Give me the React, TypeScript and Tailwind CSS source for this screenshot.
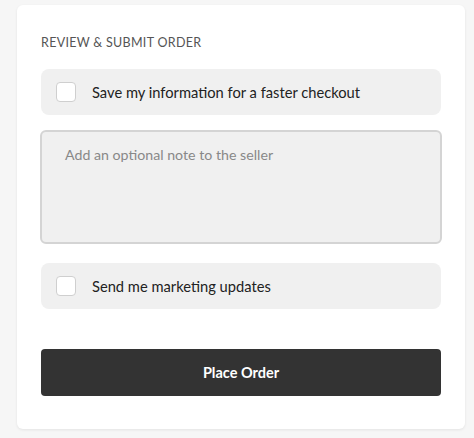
import React, { useState } from 'react';

const font = { fontFamily: 'Lato, "Liberation Sans", sans-serif' };

const CheckRow: React.FC<{ label: string }> = ({ label }) => {
  const [checked, setChecked] = useState(false);
  return (
    <label className="flex h-[46px] cursor-pointer items-center gap-4 rounded-lg bg-[#f0f0f0] px-[15px]">
      <span
        onClick={() => setChecked(!checked)}
        className={`h-5 w-5 shrink-0 rounded-[4px] border border-[#cfcfcf] ${checked ? 'bg-[#333]' : 'bg-white'}`}
      />
      <span className="text-[14.7px] text-[#222]">{label}</span>
    </label>
  );
};

export default function App() {
  return (
    <div className="min-h-[438px] w-[474px] bg-[#f6f6f6] pt-[5px] pl-[17px]" style={font}>
      <div className="w-[448px] h-[424px] rounded-md bg-white px-6 pt-[30px] shadow-[0_1px_3px_rgba(0,0,0,0.08)]">
        {/* Header */}
        <h2 className="text-[12.5px] leading-[16px] tracking-[0.3px] text-[#555]">REVIEW &amp; SUBMIT ORDER</h2>

        <div className="mt-[18px]">
          <CheckRow label="Save my information for a faster checkout" />
        </div>

        {/* Note */}
        <textarea
          placeholder="Add an optional note to the seller"
          className="mt-[15px] -mx-px block h-[114px] w-[402px] resize-none rounded-md border-2 border-[#d4d4d4] bg-[#f0f0f0] px-[23px] pt-[12px] text-[14.2px] text-[#222] placeholder:text-[#888] outline-none"
        />

        <div className="mt-[19px]">
          <CheckRow label="Send me marketing updates" />
        </div>

        {/* Actions */}
        <button className="mt-10 h-[47px] w-full rounded-[4px] bg-[#333333] text-[14.5px] font-bold text-white">
          Place Order
        </button>
      </div>
    </div>
  );
}
